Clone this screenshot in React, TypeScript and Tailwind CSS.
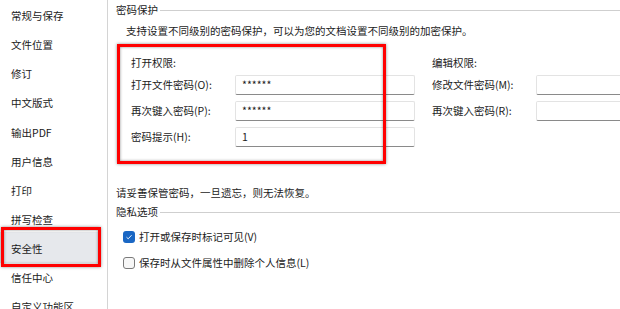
import React from "react";

const font = { fontFamily: '"Noto Sans CJK SC", "Microsoft YaHei", sans-serif' };

const navItems = [
  "常规与保存",
  "文件位置",
  "修订",
  "中文版式",
  "输出PDF",
  "用户信息",
  "打印",
  "拼写检查",
  "安全性",
  "信任中心",
  "自定义功能区",
];

function Field({ value, wide }: { value?: string; wide?: boolean }) {
  return (
    <div
      className={`h-[20px] ${wide ? "w-[100px]" : "w-[180px]"} shrink-0 rounded-[2px] border border-[#e3e3e3] border-b-[#8a8a8a] bg-white pl-[6px] flex items-center text-[10.5px] text-[#1b1b1b]`}
    >
      {value}
    </div>
  );
}

function Legend({ title }: { title: string }) {
  return (
    <div className="flex items-center h-[16px]">
      <span className="pl-[8px] pr-[2px]">{title}</span>
      <div className="flex-1 h-px bg-[#cfcfcf] mt-[1px]" />
    </div>
  );
}

function Check({ checked, label }: { checked?: boolean; label: string }) {
  return (
    <div className="flex items-center h-[16px] pl-[15px] gap-[4px]">
      {checked ? (
        <div className="w-[12px] h-[12px] rounded-[3px] bg-[#1a67c4] flex items-center justify-center">
          <svg width="8" height="8" viewBox="0 0 8 8">
            <path d="M1.5 4.2 L3.2 5.8 L6.6 2.2" stroke="white" strokeWidth="0.9" fill="none" />
          </svg>
        </div>
      ) : (
        <div className="w-[12px] h-[12px] rounded-[3px] border border-[#7a7a7a] bg-[#f7f7f7]" />
      )}
      <span>{label}</span>
    </div>
  );
}

export default function App() {
  return (
    <div
      className="relative w-[620px] h-[309px] overflow-hidden bg-white text-[10.5px] text-[#1b1b1b] flex"
      style={font}
    >
      <div className="relative w-[108px] shrink-0 border-r border-[#d4d4d4] pt-[1.5px]">
        {navItems.map((item) => (
          <div key={item} className="relative h-[29.1px] flex items-center pl-[11px]">
            {item === "安全性" && (
              <div className="absolute left-0 right-[7px] top-[-2px] bottom-0 bg-[#e6e8ec]" />
            )}
            <span className="relative">{item}</span>
          </div>
        ))}
        <div className="absolute left-[1px] top-[227px] w-[100px] h-[40px] border-[3px] border-[#f00] shadow-[0_0_3px_rgba(0,0,0,0.45),inset_0_0_3px_rgba(0,0,0,0.45)]" />
      </div>

      <div className="flex-1 flex flex-col pt-[2px]">
        <Legend title="密码保护" />
        <div className="h-[16px] mt-[5px] pl-[18px] flex items-center whitespace-nowrap">
          支持设置不同级别的密码保护，可以为您的文档设置不同级别的加密保护。
        </div>

        <div className="mt-[14px] pl-[23px] flex gap-[17px] whitespace-nowrap">
          <div className="flex flex-col gap-[6px]">
            <div className="h-[16px] flex items-center mb-[-2px] mt-[2px]">打开权限:</div>
            <div className="flex items-center h-[20px]">
              <span className="w-[104px]">打开文件密码(O):</span>
              <Field value="******" />
            </div>
            <div className="flex items-center h-[20px]">
              <span className="w-[104px]">再次键入密码(P):</span>
              <Field value="******" />
            </div>
            <div className="flex items-center h-[20px]">
              <span className="w-[104px]">密码提示(H):</span>
              <Field value="1" />
            </div>
          </div>
          <div className="flex flex-col gap-[6px]">
            <div className="h-[16px] flex items-center mb-[-2px] mt-[2px]">编辑权限:</div>
            <div className="flex items-center h-[20px]">
              <span className="w-[104px]">修改文件密码(M):</span>
              <Field wide />
            </div>
            <div className="flex items-center h-[20px]">
              <span className="w-[104px]">再次键入密码(R):</span>
              <Field wide />
            </div>
          </div>
        </div>

        <div className="h-[16px] mt-[38px] pl-[8px] flex items-center">
          请妥善保管密码，一旦遗忘，则无法恢复。
        </div>
        <div className="mt-[3px]">
          <Legend title="隐私选项" />
        </div>
        <div className="mt-[9px]">
          <Check checked label="打开或保存时标记可见(V)" />
        </div>
        <div className="mt-[10px]">
          <Check label="保存时从文件属性中删除个人信息(L)" />
        </div>
      </div>

      <div className="absolute left-[117px] top-[44px] w-[269px] h-[120px] border-[3px] border-[#f00] shadow-[0_0_3px_rgba(0,0,0,0.45),inset_0_0_3px_rgba(0,0,0,0.45)]" />
    </div>
  );
}
